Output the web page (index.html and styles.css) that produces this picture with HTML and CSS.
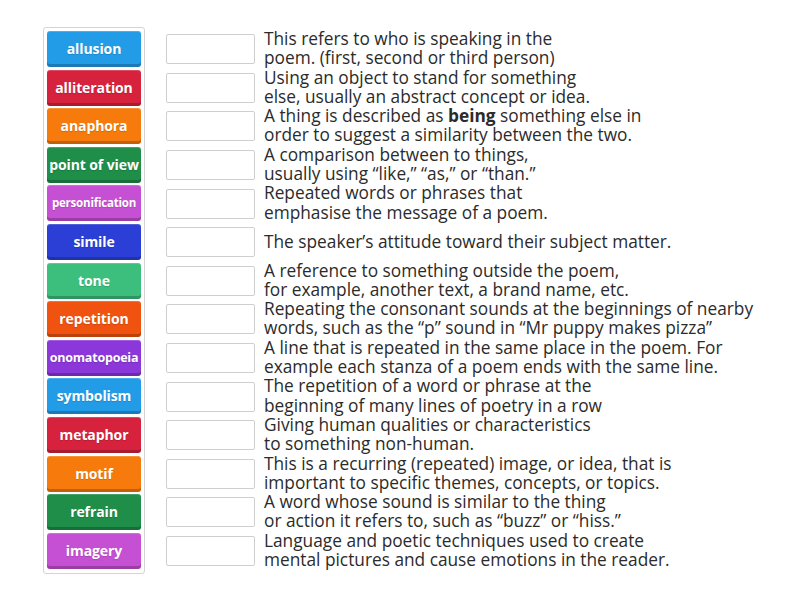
FILE: index.html
```html
<!DOCTYPE html>
<html>
<head>
<meta charset="utf-8">
<link rel="stylesheet" href="styles.css">
</head>
<body>
<div class="activity">
  <div class="bank">
    <div class="tile c-blue">allusion</div>
    <div class="tile c-red">alliteration</div>
    <div class="tile c-orange">anaphora</div>
    <div class="tile c-green">point of view</div>
    <div class="tile c-pink small">personification</div>
    <div class="tile c-indigo">simile</div>
    <div class="tile c-mint">tone</div>
    <div class="tile c-vermilion">repetition</div>
    <div class="tile c-purple mid">onomatopoeia</div>
    <div class="tile c-blue">symbolism</div>
    <div class="tile c-red">metaphor</div>
    <div class="tile c-orange">motif</div>
    <div class="tile c-green">refrain</div>
    <div class="tile c-pink">imagery</div>
  </div>
  <div class="rows">
    <div class="row"><div class="slot"></div><div class="desc">This refers to who is speaking in the<br>poem. (first, second or third person)</div></div>
    <div class="row"><div class="slot"></div><div class="desc">Using an object to stand for something<br>else, usually an abstract concept or idea.</div></div>
    <div class="row"><div class="slot"></div><div class="desc">A thing is described as <b>being</b> something else in<br>order to suggest a similarity between the two.</div></div>
    <div class="row"><div class="slot"></div><div class="desc">A comparison between to things,<br>usually using “like,” “as,” or “than.”</div></div>
    <div class="row"><div class="slot"></div><div class="desc">Repeated words or phrases that<br>emphasise the message of a poem.</div></div>
    <div class="row"><div class="slot"></div><div class="desc">The speaker’s attitude toward their subject matter.</div></div>
    <div class="row"><div class="slot"></div><div class="desc">A reference to something outside the poem,<br>for example, another text, a brand name, etc.</div></div>
    <div class="row"><div class="slot"></div><div class="desc">Repeating the consonant sounds at the beginnings of nearby<br>words, such as the “p” sound in “Mr puppy makes pizza”</div></div>
    <div class="row"><div class="slot"></div><div class="desc">A line that is repeated in the same place in the poem. For<br>example each stanza of a poem ends with the same line.</div></div>
    <div class="row"><div class="slot"></div><div class="desc">The repetition of a word or phrase at the<br>beginning of many lines of poetry in a row</div></div>
    <div class="row"><div class="slot"></div><div class="desc">Giving human qualities or characteristics<br>to something non-human.</div></div>
    <div class="row"><div class="slot"></div><div class="desc">This is a recurring (repeated) image, or idea, that is<br>important to specific themes, concepts, or topics.</div></div>
    <div class="row"><div class="slot"></div><div class="desc">A word whose sound is similar to the thing<br>or action it refers to, such as “buzz” or “hiss.”</div></div>
    <div class="row"><div class="slot"></div><div class="desc">Language and poetic techniques used to create<br>mental pictures and cause emotions in the reader.</div></div>
  </div>
</div>
</body>
</html>
```

FILE: styles.css
```css
html, body {
  margin: 0;
  padding: 0;
  background: #ffffff;
}

body {
  font-family: "Open Sans", "Liberation Sans", sans-serif;
  width: 800px;
  height: 600px;
  overflow: hidden;
}

.activity {
  display: flex;
  align-items: flex-start;
  padding: 27px 0 0 43px;
}

.bank {
  display: flex;
  flex-direction: column;
  gap: 2.6px;
  width: 94px;
  padding: 3px 3px 4px 3px;
  border: 1px solid #d4d4d4;
  border-radius: 3px;
}

.tile {
  height: 36px;
  border-radius: 3px;
  display: flex;
  align-items: center;
  justify-content: center;
  color: #ffffff;
  font-weight: 700;
  font-size: 14px;
  letter-spacing: -0.1px;
  white-space: nowrap;
  box-shadow: inset 0 -3px 0 rgba(0, 0, 0, 0.22), inset 0 1px 0 rgba(255, 255, 255, 0.18);
  text-shadow: 0 1px 1px rgba(0, 0, 0, 0.15);
  padding-bottom: 1px;
  box-sizing: border-box;
}

.tile.small { font-size: 11.5px; letter-spacing: -0.2px; }
.tile.mid { font-size: 12.5px; letter-spacing: -0.2px; }

.c-blue { background: #239ce8; }
.c-red { background: #d6223d; }
.c-orange { background: #f67b0c; }
.c-green { background: #1e8e49; }
.c-pink { background: #c650d3; }
.c-indigo { background: #2b3fd7; }
.c-mint { background: #3cbf7c; }
.c-vermilion { background: #f0520f; }
.c-purple { background: #8b37d9; }

.rows {
  display: flex;
  flex-direction: column;
  margin-left: 21px;
  padding-top: 3px;
}

.row {
  height: 38.6px;
  display: flex;
  align-items: center;
  gap: 9px;
}

.slot {
  width: 87px;
  height: 28px;
  border: 1px solid #cfcfcf;
  border-radius: 2px;
  background: #ffffff;
  flex: none;
}

.desc {
  font-size: 17.3px;
  line-height: 19.3px;
  color: #2b2b2b;
  white-space: nowrap;
  margin-top: -2px;
}

.desc b {
  font-weight: 700;
}
```
